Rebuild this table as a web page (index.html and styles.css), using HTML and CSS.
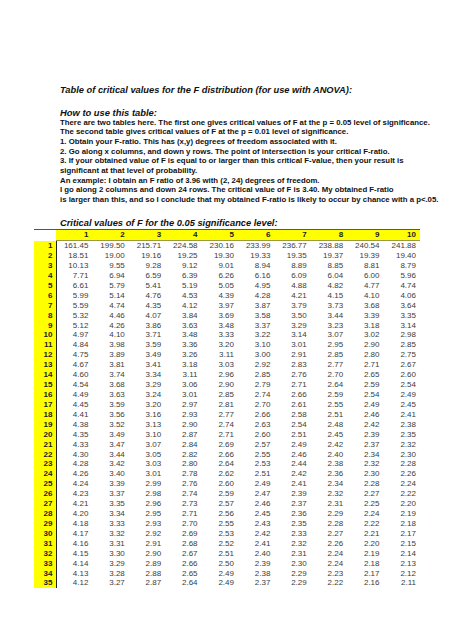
FILE: index.html
```html
<!DOCTYPE html>
<html>
<head>
<meta charset="utf-8">
<link rel="stylesheet" href="styles.css">
</head>
<body>
<div class="page">
  <div class="doc">
    <h1 class="title">Table of critical values for the F distribution (for use with ANOVA):</h1>
    <h2 class="howto">How to use this table:</h2>
    <div class="instructions">
      <div class="line">There are two tables here. The first one gives critical values of F at the p = 0.05 level of significance.</div>
      <div class="line">The second table gives critical values of F at the p = 0.01 level of significance.</div>
      <div class="line">1. Obtain your F-ratio. This has (x,y) degrees of freedom associated with it.</div>
      <div class="line">2. Go along x columns, and down y rows. The point of intersection is your critical F-ratio.</div>
      <div class="line">3. If your obtained value of F is equal to or larger than this critical F-value, then your result is</div>
      <div class="line">significant at that level of probability.</div>
      <div class="line">An example: I obtain an F ratio of 3.96 with (2, 24) degrees of freedom.</div>
      <div class="line">I go along 2 columns and down 24 rows. The critical value of F is 3.40. My obtained F-ratio</div>
      <div class="line">is larger than this, and so I conclude that my obtained F-ratio is likely to occur by chance with a p&lt;.05.</div>
    </div>
    <h2 class="subtitle">Critical values of F for the 0.05 significance level:</h2>
  </div>
  <table class="ftable" id="ftable">
    <colgroup>
      <col class="c-row">
      <col class="c-val"><col class="c-val"><col class="c-val"><col class="c-val"><col class="c-val">
      <col class="c-val"><col class="c-val"><col class="c-val"><col class="c-val"><col class="c-val">
    </colgroup>
    <thead>
      <tr class="hdr">
        <th class="corner"></th>
        <th>1</th><th>2</th><th>3</th><th>4</th><th>5</th><th>6</th><th>7</th><th>8</th><th>9</th><th>10</th>
      </tr>
    </thead>
    <tbody>
      <tr><th>1</th><td>161.45</td><td>199.50</td><td>215.71</td><td>224.58</td><td>230.16</td><td>233.99</td><td>236.77</td><td>238.88</td><td>240.54</td><td>241.88</td></tr>
      <tr><th>2</th><td>18.51</td><td>19.00</td><td>19.16</td><td>19.25</td><td>19.30</td><td>19.33</td><td>19.35</td><td>19.37</td><td>19.39</td><td>19.40</td></tr>
      <tr><th>3</th><td>10.13</td><td>9.55</td><td>9.28</td><td>9.12</td><td>9.01</td><td>8.94</td><td>8.89</td><td>8.85</td><td>8.81</td><td>8.79</td></tr>
      <tr><th>4</th><td>7.71</td><td>6.94</td><td>6.59</td><td>6.39</td><td>6.26</td><td>6.16</td><td>6.09</td><td>6.04</td><td>6.00</td><td>5.96</td></tr>
      <tr><th>5</th><td>6.61</td><td>5.79</td><td>5.41</td><td>5.19</td><td>5.05</td><td>4.95</td><td>4.88</td><td>4.82</td><td>4.77</td><td>4.74</td></tr>
      <tr><th>6</th><td>5.99</td><td>5.14</td><td>4.76</td><td>4.53</td><td>4.39</td><td>4.28</td><td>4.21</td><td>4.15</td><td>4.10</td><td>4.06</td></tr>
      <tr><th>7</th><td>5.59</td><td>4.74</td><td>4.35</td><td>4.12</td><td>3.97</td><td>3.87</td><td>3.79</td><td>3.73</td><td>3.68</td><td>3.64</td></tr>
      <tr><th>8</th><td>5.32</td><td>4.46</td><td>4.07</td><td>3.84</td><td>3.69</td><td>3.58</td><td>3.50</td><td>3.44</td><td>3.39</td><td>3.35</td></tr>
      <tr><th>9</th><td>5.12</td><td>4.26</td><td>3.86</td><td>3.63</td><td>3.48</td><td>3.37</td><td>3.29</td><td>3.23</td><td>3.18</td><td>3.14</td></tr>
      <tr><th>10</th><td>4.97</td><td>4.10</td><td>3.71</td><td>3.48</td><td>3.33</td><td>3.22</td><td>3.14</td><td>3.07</td><td>3.02</td><td>2.98</td></tr>
      <tr><th>11</th><td>4.84</td><td>3.98</td><td>3.59</td><td>3.36</td><td>3.20</td><td>3.10</td><td>3.01</td><td>2.95</td><td>2.90</td><td>2.85</td></tr>
      <tr><th>12</th><td>4.75</td><td>3.89</td><td>3.49</td><td>3.26</td><td>3.11</td><td>3.00</td><td>2.91</td><td>2.85</td><td>2.80</td><td>2.75</td></tr>
      <tr><th>13</th><td>4.67</td><td>3.81</td><td>3.41</td><td>3.18</td><td>3.03</td><td>2.92</td><td>2.83</td><td>2.77</td><td>2.71</td><td>2.67</td></tr>
      <tr><th>14</th><td>4.60</td><td>3.74</td><td>3.34</td><td>3.11</td><td>2.96</td><td>2.85</td><td>2.76</td><td>2.70</td><td>2.65</td><td>2.60</td></tr>
      <tr><th>15</th><td>4.54</td><td>3.68</td><td>3.29</td><td>3.06</td><td>2.90</td><td>2.79</td><td>2.71</td><td>2.64</td><td>2.59</td><td>2.54</td></tr>
      <tr><th>16</th><td>4.49</td><td>3.63</td><td>3.24</td><td>3.01</td><td>2.85</td><td>2.74</td><td>2.66</td><td>2.59</td><td>2.54</td><td>2.49</td></tr>
      <tr><th>17</th><td>4.45</td><td>3.59</td><td>3.20</td><td>2.97</td><td>2.81</td><td>2.70</td><td>2.61</td><td>2.55</td><td>2.49</td><td>2.45</td></tr>
      <tr><th>18</th><td>4.41</td><td>3.56</td><td>3.16</td><td>2.93</td><td>2.77</td><td>2.66</td><td>2.58</td><td>2.51</td><td>2.46</td><td>2.41</td></tr>
      <tr><th>19</th><td>4.38</td><td>3.52</td><td>3.13</td><td>2.90</td><td>2.74</td><td>2.63</td><td>2.54</td><td>2.48</td><td>2.42</td><td>2.38</td></tr>
      <tr><th>20</th><td>4.35</td><td>3.49</td><td>3.10</td><td>2.87</td><td>2.71</td><td>2.60</td><td>2.51</td><td>2.45</td><td>2.39</td><td>2.35</td></tr>
      <tr><th>21</th><td>4.33</td><td>3.47</td><td>3.07</td><td>2.84</td><td>2.69</td><td>2.57</td><td>2.49</td><td>2.42</td><td>2.37</td><td>2.32</td></tr>
      <tr><th>22</th><td>4.30</td><td>3.44</td><td>3.05</td><td>2.82</td><td>2.66</td><td>2.55</td><td>2.46</td><td>2.40</td><td>2.34</td><td>2.30</td></tr>
      <tr><th>23</th><td>4.28</td><td>3.42</td><td>3.03</td><td>2.80</td><td>2.64</td><td>2.53</td><td>2.44</td><td>2.38</td><td>2.32</td><td>2.28</td></tr>
      <tr><th>24</th><td>4.26</td><td>3.40</td><td>3.01</td><td>2.78</td><td>2.62</td><td>2.51</td><td>2.42</td><td>2.36</td><td>2.30</td><td>2.26</td></tr>
      <tr><th>25</th><td>4.24</td><td>3.39</td><td>2.99</td><td>2.76</td><td>2.60</td><td>2.49</td><td>2.41</td><td>2.34</td><td>2.28</td><td>2.24</td></tr>
      <tr><th>26</th><td>4.23</td><td>3.37</td><td>2.98</td><td>2.74</td><td>2.59</td><td>2.47</td><td>2.39</td><td>2.32</td><td>2.27</td><td>2.22</td></tr>
      <tr><th>27</th><td>4.21</td><td>3.35</td><td>2.96</td><td>2.73</td><td>2.57</td><td>2.46</td><td>2.37</td><td>2.31</td><td>2.25</td><td>2.20</td></tr>
      <tr><th>28</th><td>4.20</td><td>3.34</td><td>2.95</td><td>2.71</td><td>2.56</td><td>2.45</td><td>2.36</td><td>2.29</td><td>2.24</td><td>2.19</td></tr>
      <tr><th>29</th><td>4.18</td><td>3.33</td><td>2.93</td><td>2.70</td><td>2.55</td><td>2.43</td><td>2.35</td><td>2.28</td><td>2.22</td><td>2.18</td></tr>
      <tr><th>30</th><td>4.17</td><td>3.32</td><td>2.92</td><td>2.69</td><td>2.53</td><td>2.42</td><td>2.33</td><td>2.27</td><td>2.21</td><td>2.17</td></tr>
      <tr><th>31</th><td>4.16</td><td>3.31</td><td>2.91</td><td>2.68</td><td>2.52</td><td>2.41</td><td>2.32</td><td>2.26</td><td>2.20</td><td>2.15</td></tr>
      <tr><th>32</th><td>4.15</td><td>3.30</td><td>2.90</td><td>2.67</td><td>2.51</td><td>2.40</td><td>2.31</td><td>2.24</td><td>2.19</td><td>2.14</td></tr>
      <tr><th>33</th><td>4.14</td><td>3.29</td><td>2.89</td><td>2.66</td><td>2.50</td><td>2.39</td><td>2.30</td><td>2.24</td><td>2.18</td><td>2.13</td></tr>
      <tr><th>34</th><td>4.13</td><td>3.28</td><td>2.88</td><td>2.65</td><td>2.49</td><td>2.38</td><td>2.29</td><td>2.23</td><td>2.17</td><td>2.12</td></tr>
      <tr><th>35</th><td>4.12</td><td>3.27</td><td>2.87</td><td>2.64</td><td>2.49</td><td>2.37</td><td>2.29</td><td>2.22</td><td>2.16</td><td>2.11</td></tr>
    </tbody>
  </table>
</div>
</body>
</html>
```

FILE: styles.css
```css
html, body {
  margin: 0;
  padding: 0;
  background: #ffffff;
}

body {
  font-family: "Liberation Sans", Arial, sans-serif;
  color: #111111;
}

.page {
  padding-top: 84px;
}

.doc {
  padding-left: 60px;
}

.title {
  margin: 0;
  font-size: 9.3px;
  line-height: 12px;
  font-weight: bold;
  font-style: italic;
  white-space: nowrap;
}

.howto {
  margin: 11.7px 0 0 0;
  font-size: 9.4px;
  line-height: 10px;
  font-weight: bold;
  font-style: italic;
  white-space: nowrap;
}

.instructions {
  margin: 0;
}

.line {
  font-size: 7.8px;
  line-height: 9.67px;
  font-weight: bold;
  white-space: nowrap;
}

.subtitle {
  margin: 12px 0 0 0;
  font-size: 9.3px;
  line-height: 12px;
  font-weight: bold;
  font-style: italic;
  white-space: nowrap;
}

.ftable {
  margin-left: 34px;
  border-collapse: collapse;
  table-layout: fixed;
  width: 386px;
  font-size: 8px;
}

.c-row {
  width: 22px;
}

.c-val {
  width: 36.4px;
}

.ftable th,
.ftable td {
  padding: 0 4px 0 0;
  text-align: right;
  white-space: nowrap;
}

.hdr th {
  background: #ffff00;
  color: #1a1a1a;
  font-weight: bold;
  height: 10.4px;
  line-height: 10.4px;
  border-top: 1px solid #555555;
  border-bottom: 1px solid #9a9a40;
}

.hdr th.corner {
  background: #ffffff;
  border-bottom: none;
}

.ftable tbody th {
  background: #ffff00;
  color: #1a1a1a;
  font-weight: bold;
  padding-right: 3px;
  border-right: 1px solid #222222;
}

.ftable tbody td,
.ftable tbody th {
  height: 9.92px;
  line-height: 9.92px;
}

.ftable tbody td {
  color: #3c3c3c;
}
```
